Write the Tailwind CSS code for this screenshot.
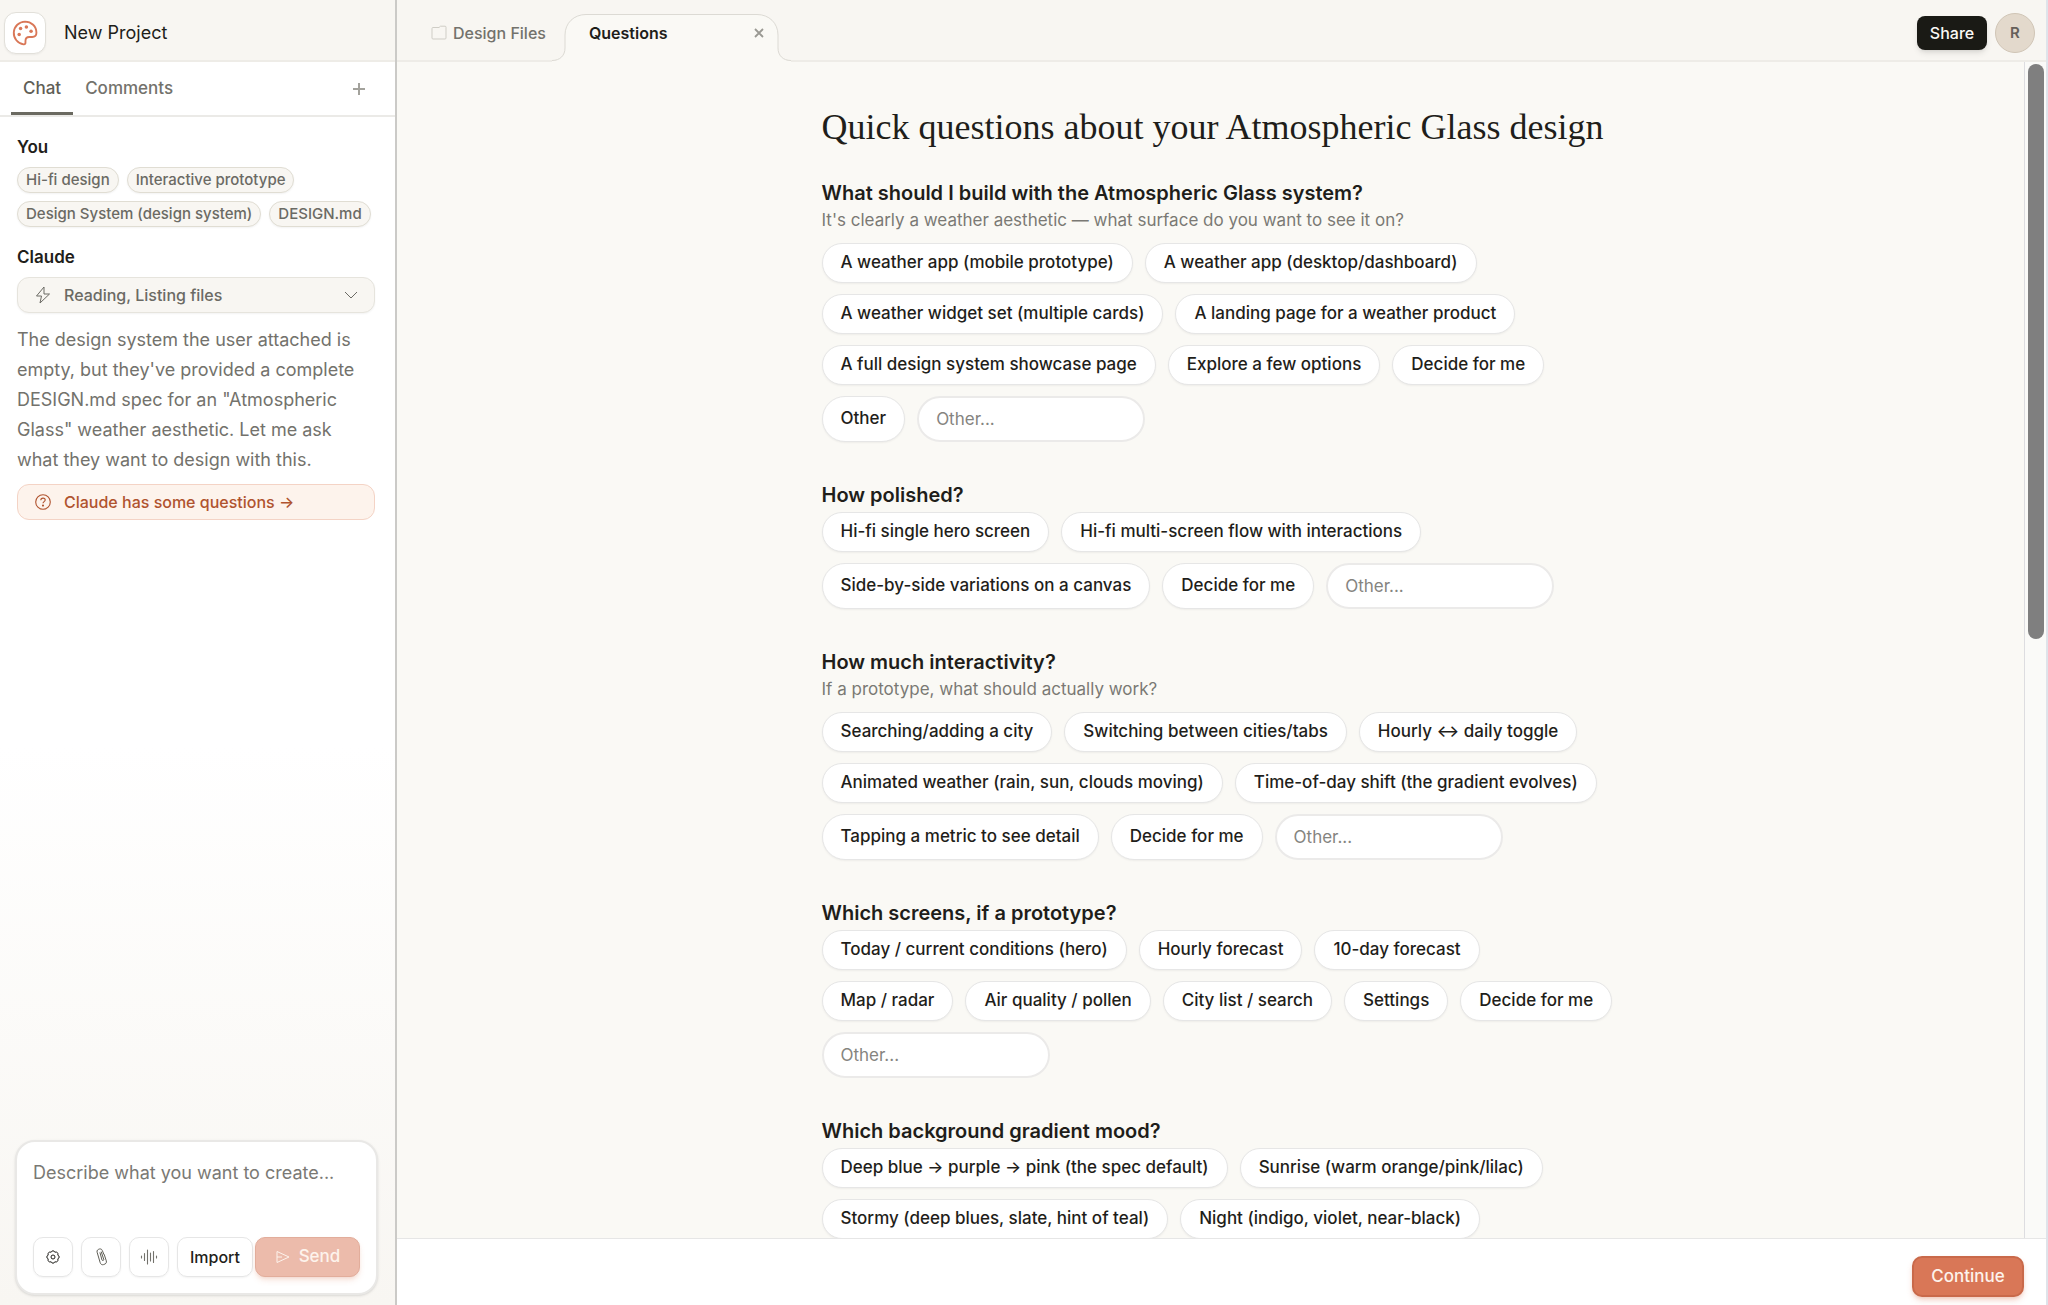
<!DOCTYPE html>
<html lang="en">
  <head>
    <meta charset="UTF-8" />
    <meta name="viewport" content="width=device-width,initial-scale=1.0" />
    <title>New Project</title>
    <script src="https://cdn.jsdelivr.net/npm/@tailwindcss/browser@4"></script>
  </head>
  <body
    class="h-screen overflow-hidden bg-[#f8f6f2] font-['Inter',sans-serif] text-[#1f1e1a]"
  >
    <div class="flex h-full border-r-2 border-[#dfe3ea]">
      <!-- Sidebar -->
      <aside class="flex w-[397px] shrink-0 flex-col border-r-2 border-[#cbcac7]">
        <header class="flex h-[62px] shrink-0 items-center gap-[18px] border-b-2 border-[#eeece7] px-1 pt-[6px]">
          <a
            href="#"
            aria-label="Home"
            class="flex h-[42px] w-[42px] items-center justify-center rounded-xl border border-[#e2e0da] bg-white shadow-xs"
          >
            <svg class="h-7 w-7" viewBox="0 0 24 24" fill="none" stroke="#d97757" stroke-width="1.6" stroke-linejoin="round">
              <path d="M12 2.2a9.8 9.8 0 0 0-1.2 19.5c1.2.2 1.6-.6 1.6-1.6v-1.3c0-2 1.2-3.4 3.2-3.4h2.6c2.2 0 3.600-1.200 3.600-3.600C21.800 6.300 17.500 2.200 12 2.200z" />
              <g fill="#d97757" stroke="none">
                <circle cx="8.2" cy="8.2" r="1.5" />
                <circle cx="13.2" cy="6.8" r="1.5" />
                <circle cx="17.2" cy="10.4" r="1.5" />
                <circle cx="7" cy="13.2" r="1.5" />
              </g>
            </svg>
          </a>
          <h1 class="text-lg">New Project</h1>
        </header>

        <div class="flex min-h-0 flex-1 flex-col bg-linear-to-b from-white from-55% to-[#f8f6f2]">
          <nav class="flex h-[55px] shrink-0 items-stretch border-b-2 border-[#ebeae7] pl-[11px] text-[17px] font-medium text-[#73726c]">
            <button class="border-b-3 border-[#6b6a61] px-3 pt-1 text-[#5f5e56]">Chat</button>
            <button class="border-b-3 border-transparent px-3 pt-1">Comments</button>
            <button aria-label="New chat" class="mr-7 ml-auto text-[#a3a29c]">
              <svg class="h-4 w-4" viewBox="0 0 16 16" fill="none" stroke="currentColor" stroke-width="2"><path d="M8 2v12M2 8h12" /></svg>
            </button>
          </nav>

          <div class="flex-1 pt-[18px] pr-5 pl-[17px]">
            <h2 class="text-[17px] leading-6 font-semibold">You</h2>
            <div class="mt-2 flex flex-wrap gap-2 text-[15px] font-medium text-[#6b6a64]">
              <span class="flex h-[26px] items-center rounded-full border border-[#e0ddd3] bg-[#f8f6f2] px-2 shadow-xs">Hi-fi design</span>
              <span class="flex h-[26px] items-center rounded-full border border-[#e0ddd3] bg-[#f8f6f2] px-2 shadow-xs">Interactive prototype</span>
              <span class="flex h-[26px] items-center rounded-full border border-[#e0ddd3] bg-[#f8f6f2] px-2 shadow-xs">Design System (design system)</span>
              <span class="flex h-[26px] items-center rounded-full border border-[#e0ddd3] bg-[#f8f6f2] px-2 shadow-xs">DESIGN.md</span>
            </div>
            <h2 class="mt-[18px] text-[17px] leading-6 font-semibold">Claude</h2>
            <button class="mt-2 flex h-9 w-full items-center gap-3 rounded-xl border border-[#e6e4dd] bg-[#f8f6f2] px-4 text-base font-medium text-[#6b6a64] shadow-xs">
              <svg class="h-[18px] w-[18px]" viewBox="0 0 18 18" fill="none" stroke="currentColor" stroke-linejoin="round"><path d="M10 1 2.500 10h5l-1.500 7L15.500 8h-5.500z" /></svg>
              Reading, Listing files
              <svg class="ml-auto h-3.5 w-3.5" viewBox="0 0 14 14" fill="none" stroke="currentColor"><path d="m1 4 6 6 6-6" /></svg>
            </button>
            <p class="mt-3 text-lg leading-[30px] text-[#73726c]">
              The design system the user attached is empty, but they've provided a complete DESIGN.md spec for an "Atmospheric Glass" weather aesthetic. Let me ask what they want to design with this.
            </p>
            <button class="mt-[9px] flex h-9 w-full items-center gap-3 rounded-xl border border-[#f4d3c5] bg-[#fdf3ec] px-4 text-base font-medium text-[#b0532f]">
              <svg class="h-[18px] w-[18px]" viewBox="0 0 18 18" fill="none" stroke="currentColor" stroke-width="1.1"><circle cx="9" cy="9" r="7.3" /><path d="M6.800 7.200c0-1.300 1-2.100 2.200-2.100s2.200.8 2.200 2c0 1.500-2.200 1.600-2.200 3.200" /><circle cx="9" cy="12.600" r=".5" fill="currentColor" /></svg>
              Claude has some questions →
            </button>
          </div>

          <form class="mr-[17px] mb-[10px] ml-[15px] flex h-[155px] flex-col rounded-[20px] border-2 border-[#e9e8e6] bg-white p-4 shadow-sm">
            <textarea aria-label="Message" placeholder="Describe what you want to create..." class="min-h-0 flex-1 resize-none text-lg leading-[30px] placeholder:text-[#7a7974]"></textarea>
            <div class="flex items-center gap-2">
              <button type="button" aria-label="Settings" class="flex h-10 w-10 shrink-0 items-center justify-center rounded-[10px] border border-[#e6e6e6] shadow-xs">
                <svg class="h-4 w-4" viewBox="0 0 16 16" fill="none" stroke="currentColor"><circle cx="8" cy="8" r="2" /><path d="M8 1.800Q9.300 1.800 9.800 3.200Q11.400 2.600 12.400 3.600Q13.400 4.600 12.800 6.200Q14.200 6.700 14.200 8Q14.200 9.300 12.800 9.800Q13.400 11.400 12.400 12.400Q11.400 13.400 9.800 12.800Q9.300 14.200 8 14.200Q6.700 14.200 6.200 12.800Q4.600 13.400 3.600 12.400Q2.600 11.400 3.200 9.800Q1.800 9.300 1.800 8Q1.800 6.700 3.200 6.200Q2.600 4.600 3.600 3.600Q4.600 2.600 6.200 3.200Q6.700 1.800 8 1.800z" /></svg>
              </button>
              <button type="button" aria-label="Attach a file" class="flex h-10 w-10 shrink-0 items-center justify-center rounded-[10px] border border-[#e6e6e6] text-[#5f5e56] shadow-xs">
                <svg class="h-[18px] w-[18px]" viewBox="0 0 18 18" fill="none" stroke="currentColor" stroke-linecap="round"><path d="M11.800 6.200 10.300 2.500C9.800 1.200 8.700.7 7.400 1c-1.500.5-2.800 1.300-2.300 3.200l3 10.200c.5 1.800 1.700 2.700 3.400 2.200 2.200-.6 3.400-1.700 2.800-3.700l-2-6.200M8 4.800l2 7.200c.3 1 2.100.5 1.800-.5L9.300 4" /></svg>
              </button>
              <button type="button" aria-label="Voice" class="flex h-10 w-10 shrink-0 items-center justify-center rounded-[10px] border border-[#e6e6e6] text-[#73726c] shadow-xs">
                <svg class="h-[18px] w-[18px]" viewBox="0 0 18 18" fill="none" stroke="currentColor" stroke-width="1.1" stroke-linecap="round"><path d="M1.500 8v2M4.500 5.500v7M7.500 2v14M10.500 5v8M13.500 3.500v11M16.500 8v2" /></svg>
              </button>
              <div class="flex flex-1 gap-[2px]">
                <button type="button" class="h-10 w-[76px] rounded-[10px] border border-[#e6e6e6] text-base font-medium shadow-xs">Import</button>
                <button type="submit" class="flex h-10 flex-1 items-center justify-center gap-2 rounded-[10px] border border-[#e2ad9b] bg-[#ecbbab] text-[17px] font-medium text-[#fdf3ec] shadow-md shadow-[#d97757]/20">
                  <svg class="h-4 w-4" viewBox="0 0 16 16" fill="none" stroke="currentColor" stroke-linejoin="round"><path d="M2 2.500 14 8 2 13.500V8zM2 8h5" /></svg>
                  Send
                </button>
              </div>
            </div>
          </form>
        </div>
      </aside>

      <main class="flex min-w-0 flex-1 flex-col">
        <header class="flex h-[62px] shrink-0 items-end border-b-2 border-[#eeece7] pr-[11px] pl-[34px]">
          <button class="mr-[19px] mb-[7px] flex h-10 items-center gap-[6px] text-base font-medium text-[#73726c]">
            <svg class="h-4 w-4" viewBox="0 0 16 16" fill="none" stroke="#cfcdc6" stroke-linejoin="round"><path d="M1 3.500q0-1 1-1h6L9.500 1.200H14q1 0 1 1V13q0 1-1 1H2q-1 0-1-1z" /></svg>
            Design Files
          </button>
          <div class="relative z-10 -mb-[2px] flex h-[48px] w-[213px] items-center pr-[13px] pb-[10px] pl-[24px]">
            <svg class="absolute top-0 -left-[13px] -z-10 h-[48px] w-[239px]" viewBox="0 0 239 48" fill="none">
              <path d="M0 47C8 47 13 42 13 34V21C13 9 22 1 34 1H205C217 1 226 9 226 21V34C226 42 231 47 239 47V48H0z" fill="#faf9f5" />
              <path d="M0 46.500C8 46.500 13 41.500 13 34V21C13 9 22 .5 34 .5H205C217 .5 226 9 226 21V34C226 41.500 231 46.500 239 46.500" stroke="#dcdad4" />
            </svg>
            <button class="text-base font-semibold">Questions</button>
            <button aria-label="Close tab" class="ml-auto text-[#9a9993]">
              <svg class="h-3 w-3" viewBox="0 0 12 12" fill="none" stroke="currentColor" stroke-width="1.8"><path d="m2 2 8 8M10 2l-8 8" /></svg>
            </button>
          </div>
          <div class="mb-[7px] ml-auto flex items-center gap-2">
            <button class="h-[34px] w-[70px] rounded-lg bg-[#1a1a15] text-base font-medium text-[#faf9f5] shadow-md">Share</button>
            <button class="h-10 w-10 rounded-full border border-[#d0c5b6] bg-[#e3d9cc] text-[15px] font-semibold text-[#66605a]">R</button>
          </div>
        </header>

        <div class="relative min-h-0 flex-1 overflow-hidden bg-[#faf9f5]">
          <div class="mx-auto max-w-[800px] pt-[43px]">
            <h1 class="font-['Liberation_Serif',serif] text-4xl leading-[44px]">Quick questions about your Atmospheric Glass design</h1>
            <div id="questions" class="mt-[31px] flex max-w-[792px] flex-col gap-10"></div>
          </div>
          <div class="absolute inset-y-0 right-0 w-[22px] border-l border-[#dddde0] bg-[#fafaf8] pt-[2px] pl-[3px]">
            <div class="h-[49%] w-4 rounded-full bg-[#7f7f7f]"></div>
          </div>
        </div>

        <footer class="flex h-[67px] shrink-0 justify-end border-t border-[#e6e6e6] bg-white pt-[17px] pr-[22px]">
          <button class="h-[41px] w-[112px] rounded-[10px] border-2 border-[#c9694a] bg-[#d97757] text-[17px] font-medium text-[#fdf3ec] shadow-md shadow-[#d97757]/30">Continue</button>
        </footer>
      </main>
    </div>

    <script>
      const questions = [
        {
          title: 'What should I build with the Atmospheric Glass system?',
          hint: "It's clearly a weather aesthetic — what surface do you want to see it on?",
          options: [
            'A weather app (mobile prototype)',
            'A weather app (desktop/dashboard)',
            'A weather widget set (multiple cards)',
            'A landing page for a weather product',
            'A full design system showcase page',
            'Explore a few options',
            'Decide for me',
            'Other',
          ],
        },
        {
          title: 'How polished?',
          options: [
            'Hi-fi single hero screen',
            'Hi-fi multi-screen flow with interactions',
            'Side-by-side variations on a canvas',
            'Decide for me',
          ],
        },
        {
          title: 'How much interactivity?',
          hint: 'If a prototype, what should actually work?',
          options: [
            'Searching/adding a city',
            'Switching between cities/tabs',
            'Hourly ↔ daily toggle',
            'Animated weather (rain, sun, clouds moving)',
            'Time-of-day shift (the gradient evolves)',
            'Tapping a metric to see detail',
            'Decide for me',
          ],
        },
        {
          title: 'Which screens, if a prototype?',
          options: [
            'Today / current conditions (hero)',
            'Hourly forecast',
            '10-day forecast',
            'Map / radar',
            'Air quality / pollen',
            'City list / search',
            'Settings',
            'Decide for me',
          ],
        },
        {
          title: 'Which background gradient mood?',
          options: [
            'Deep blue → purple → pink (the spec default)',
            'Sunrise (warm orange/pink/lilac)',
            'Stormy (deep blues, slate, hint of teal)',
            'Night (indigo, violet, near-black)',
          ],
        },
      ];

      const pill = (text) =>
        `<button class="min-h-10 rounded-3xl border border-[#e6e6e6] bg-white px-[18px] text-[17px] font-medium shadow-xs">${text}</button>`;

      const render = (q) => `
        <section>
          <h2 class="mb-1 text-xl leading-[26px] font-semibold">${q.title}</h2>
          ${q.hint ? `<p class="mb-3 text-[17px] leading-[21px] text-[#7a7974]">${q.hint}</p>` : ''}
          <div class="flex flex-wrap gap-x-3 gap-y-[11px]">
            ${q.options.map(pill).join('')}
            <input type="text" aria-label="Other answer" placeholder="Other..." class="h-[46px] w-[228px] rounded-3xl border-2 border-[#ebeae9] bg-white px-[17px] text-[17px] placeholder:text-[#85847f]" />
          </div>
        </section>`;

      document.querySelector('#questions').innerHTML = questions.map(render).join('');
    </script>
  </body>
</html>
